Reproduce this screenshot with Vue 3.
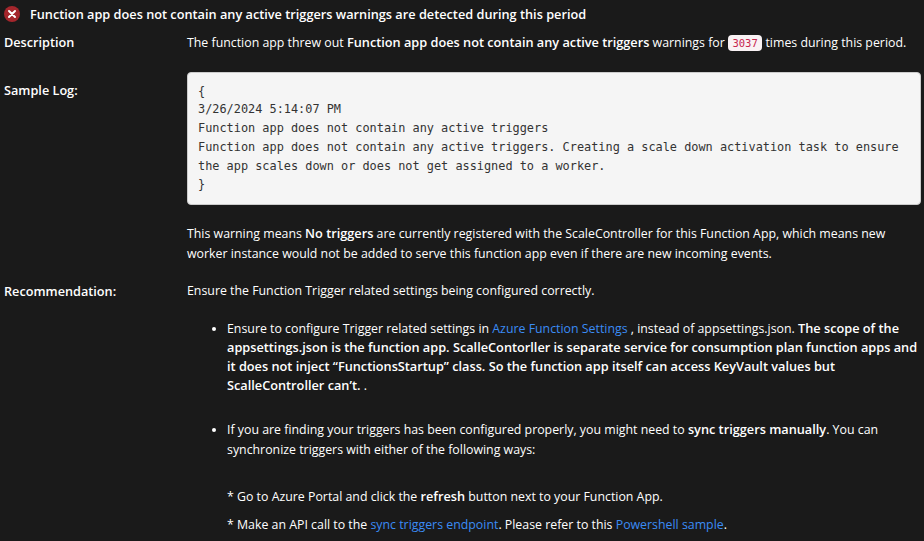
<script setup>
const logLines = [
  '{',
  '3/26/2024 5:14:07 PM',
  'Function app does not contain any active triggers',
  'Function app does not contain any active triggers. Creating a scale down activation task to ensure the app scales down or does not get assigned to a worker.',
  '}'
]
</script>

<template>
  <div class="page">
    <header class="title">
      <svg class="err" width="16" height="16" viewBox="0 0 16 16">
        <circle cx="8" cy="8" r="8" fill="#a4262c" />
        <path d="M5 5l6 6M11 5l-6 6" stroke="#fff" stroke-width="2" stroke-linecap="round" />
      </svg>
      <span>Function app does not contain any active triggers warnings are detected during this period</span>
    </header>

    <section class="row desc">
      <div class="label">Description</div>
      <div class="body">
        The function app threw out <b>Function app does not contain any active triggers</b> warnings for
        <code class="count">3037</code> times during this period.
      </div>
    </section>

    <section class="row sample">
      <div class="label">Sample Log:</div>
      <div class="body">
        <pre class="log"><template v-for="line in logLines" :key="line">{{ line }}
</template></pre>
        <p class="explain">
          This warning means <b>No triggers</b> are currently registered with the ScaleController for this Function App, which means new worker instance would not be added to serve this function app even if there are new incoming events.
        </p>
      </div>
    </section>

    <section class="row rec">
      <div class="label">Recommendation:</div>
      <div class="body">
        <p class="lead">Ensure the Function Trigger related settings being configured correctly.</p>
        <ul>
          <li class="first-item">
            Ensure to configure Trigger related settings in <a>Azure Function Settings</a> , instead of appsettings.json.
            <b>The scope of the appsettings.json is the function app. ScalleContorller is separate service for consumption plan function apps and it does not inject “FunctionsStartup” class. So the function app itself can access KeyVault values but ScalleController can’t.</b> .
          </li>
          <li>
            If you are finding your triggers has been configured properly, you might need to <b>sync triggers manually</b>. You can synchronize triggers with either of the following ways:
            <p class="way first">* Go to Azure Portal and click the <b>refresh</b> button next to your Function App.</p>
            <p class="way">* Make an API call to the <a>sync triggers endpoint</a>. Please refer to this <a>Powershell sample</a>.</p>
          </li>
        </ul>
      </div>
    </section>
  </div>
</template>

<style>
html, body { margin: 0; background: #1a1a1a; overflow: hidden; }
</style>

<style scoped>
.page {
  width: 924px;
  height: 541px;
  overflow: hidden;
  box-sizing: border-box;
  background: #1a1a1a;
  color: #fff;
  padding: 4px 3px 0 4px;
  font-family: "Open Sans", "Noto Sans", sans-serif;
  font-size: 12.35px;
  line-height: 20px;
}
.title {
  display: flex;
  align-items: center;
  gap: 10px;
  font-weight: 600;
  font-size: 12.74px;
  height: 20px;
}
.err { flex: none; }
.row {
  display: grid;
  grid-template-columns: 183px 1fr;
}
.desc { margin-top: 8px; }
.sample { margin-top: 19px; }
.rec { margin-top: 17px; }
.label { font-weight: 600; font-size: 12.7px; }
.sample .label { margin-top: 8px; }
.body { min-width: 0; }
b { font-weight: 600; font-size: 12.74px; }
.count {
  font-family: "DejaVu Sans Mono", monospace;
  font-size: 10.5px;
  color: #c7254e;
  background: #f9f2f4;
  border-radius: 4px;
  padding: 2px 4.5px;
}
.log {
  margin: 0;
  padding: 8.5px 10px 9.5px;
  background: #f5f5f5;
  color: #333;
  border: 1px solid #ccc;
  border-radius: 4px;
  font-family: "DejaVu Sans Mono", monospace;
  font-size: 11.88px;
  line-height: 18.8px;
  white-space: pre-wrap;
  word-break: normal;
}
.explain { margin: 18px 0 0; }
.lead { margin: 0; }
ul { margin: 18px 0 0; padding: 0 0 0 40px; }
li { margin-bottom: 24px; }
.first-item { line-height: 18px; }
.way { margin: 0; }
.way.first { margin-top: 26px; }
.way + .way { margin-top: 8px; }
a { color: #3b8cf5; }
</style>
